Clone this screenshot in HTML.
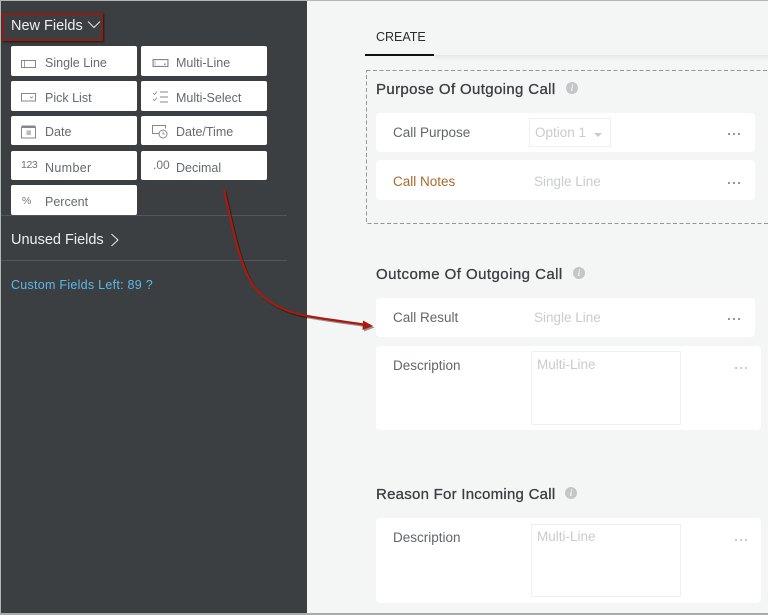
<!DOCTYPE html>
<html><head><meta charset="utf-8">
<style>
html,body{margin:0;padding:0}
body{width:768px;height:615px;position:relative;overflow:hidden;background:#f4f5f5;font-family:"Liberation Sans",sans-serif}
.w{position:absolute;left:0;top:0;width:768px;height:615px;overflow:hidden;filter:blur(.35px)}
.a{position:absolute}
.t{position:absolute;white-space:nowrap;line-height:16px}
.b{position:absolute;background:#fff;border-radius:2px}
.bt{position:absolute;white-space:nowrap;font-size:12.5px;line-height:16px;color:#666a6c}
.r{position:absolute;background:#fff;border-radius:4px}
.h{position:absolute;white-space:nowrap;font-size:15px;line-height:18px;color:#3b3e40;-webkit-text-stroke:.3px #3b3e40}
.l{position:absolute;white-space:nowrap;font-size:13.5px;line-height:16px;color:#636668}
.p{position:absolute;white-space:nowrap;font-size:13.5px;line-height:16px;color:#c9cbcc}
.i{position:absolute;width:12px;height:12px;border-radius:50%;background:#c4c6c7;color:#f4f5f5;font:italic bold 9px/12px "Liberation Serif",serif;text-align:center}
.d{position:absolute;width:14px;height:3px}
.d i{position:absolute;top:0;width:2px;height:2px;border-radius:50%;background:#75787a}
.d.f i{background:#b8babb}
.ta{position:absolute;border:1px solid #eeefef;box-sizing:border-box;background:#fff}
svg{position:absolute;overflow:visible}
</style></head>
<body>
<div class="w">
<div class="a" style="left:0;top:0;width:768px;height:1px;background:#b4b5b5"></div>
<div class="a" style="left:0;top:613px;width:768px;height:2px;background:#a9aaaa"></div>
<div class="a" style="left:0;top:1px;width:1px;height:612px;background:#b4b5b5"></div>
<div class="a" style="left:1px;top:1px;width:306px;height:612px;background:#3b3f42"></div>

<div class="a" style="left:2px;top:13px;width:101px;height:28px;box-sizing:border-box;border:2px solid #8f1d14;box-shadow:1px 1px 2px rgba(0,0,0,.6)"></div>
<div class="t" style="left:11px;top:18px;font-size:14.5px;color:#eef0f0">New Fields</div>
<svg style="left:0;top:0" width="768" height="615" viewBox="0 0 768 615" fill="none">
<path d="M88 21.5L94 27.5L100 21.5" stroke="#e8eaea" stroke-width="1"/>
<path d="M111.5 234L118 240L111.5 246" stroke="#e8eaea" stroke-width="1"/>
</svg>

<div class="b" style="left:11px;top:46px;width:126px;height:30px"></div>
<div class="b" style="left:141px;top:46px;width:126px;height:30px"></div>
<div class="b" style="left:11px;top:81px;width:126px;height:30px"></div>
<div class="b" style="left:141px;top:81px;width:126px;height:30px"></div>
<div class="b" style="left:11px;top:116px;width:126px;height:29px"></div>
<div class="b" style="left:141px;top:116px;width:126px;height:29px"></div>
<div class="b" style="left:11px;top:151px;width:126px;height:29px"></div>
<div class="b" style="left:141px;top:151px;width:126px;height:29px"></div>
<div class="b" style="left:11px;top:185px;width:126px;height:30px"></div>

<div class="bt" style="left:45px;top:55px">Single Line</div>
<div class="bt" style="left:176px;top:55px">Multi-Line</div>
<div class="bt" style="left:45px;top:90px">Pick List</div>
<div class="bt" style="left:176px;top:90px">Multi-Select</div>
<div class="bt" style="left:45px;top:124px">Date</div>
<div class="bt" style="left:176px;top:124px">Date/Time</div>
<div class="bt" style="left:45px;top:160px;letter-spacing:.35px">Number</div>
<div class="bt" style="left:176px;top:160px">Decimal</div>
<div class="bt" style="left:45px;top:194px">Percent</div>

<div class="t" style="left:21px;top:157px;font-size:10.5px;color:#707375;letter-spacing:-.4px">123</div>
<div class="t" style="left:153px;top:157px;font-size:12px;color:#707375">.00</div>
<div class="t" style="left:22px;top:193px;font-size:10.5px;color:#707375">%</div>

<svg style="left:0;top:0" width="768" height="615" viewBox="0 0 768 615" fill="none" stroke="#85888a" stroke-width="1">
<rect x="21.5" y="60.5" width="14" height="7"/>
<path d="M24.5 61v6" stroke-width=".8"/>
<rect x="153" y="59.5" width="15" height="7" fill="#dcdddd"/>
<rect x="156" y="60.5" width="11" height="5" fill="#fff" stroke="none"/>
<rect x="164" y="63.5" width="1.5" height="1.5" fill="#85888a" stroke="none"/>
<rect x="21.5" y="93.5" width="14" height="7.5"/>
<path d="M30 96.5l1.5 1.5 1.5-1.5" stroke-width=".8"/>
<path d="M153 93l1.5 1.5 2.5-3M153 99l1.5 1.5 2.5-3" stroke-width=".8"/>
<path d="M160 92h8M160 97h8M160 102h8" stroke-width=".9"/>
<rect x="21.5" y="127.5" width="14" height="10.5"/>
<path d="M21.5 126.5h14" stroke-width="2"/>
<rect x="26.5" y="130.5" width="4.5" height="4.5" fill="#b8babb" stroke="none"/>
<path d="M159 133.5h-6.5v-8h13v3"/>
<circle cx="163" cy="134" r="4" fill="#fff"/>
<path d="M163 131.5v2.5h2" stroke-width=".8"/>
</svg>

<div class="a" style="left:1px;top:215px;width:286px;height:1px;background:#52565a"></div>
<div class="a" style="left:1px;top:260px;width:286px;height:1px;background:#52565a"></div>
<div class="t" style="left:11px;top:232px;font-size:14.5px;color:#eef0f0">Unused Fields</div>
<div class="t" style="left:11px;top:277px;font-size:12.5px;color:#5bb8ea;letter-spacing:.27px">Custom Fields Left: 89 ?</div>

<!-- main -->
<div class="a" style="left:434px;top:55px;width:334px;height:6px;background:linear-gradient(#e6e7e7,#f4f5f5)"></div>
<div class="t" style="left:376px;top:29px;font-size:12.5px;color:#2a2c2e">CREATE</div>
<div class="a" style="left:365px;top:54px;width:69px;height:2px;background:#111"></div>
<svg style="left:0;top:0" width="768" height="615" viewBox="0 0 768 615" fill="none">
<rect x="366.5" y="70.5" width="420" height="153" stroke="#94979a" stroke-width="1" stroke-dasharray="4 2.5"/>
</svg>

<div class="h" style="left:376px;top:81px;letter-spacing:.36px">Purpose Of Outgoing Call</div>
<div class="i" style="left:566px;top:82px">i</div>
<div class="r" style="left:376px;top:113px;width:379px;height:39px"></div>
<div class="r" style="left:376px;top:160px;width:379px;height:40px"></div>
<div class="l" style="left:393px;top:125px">Call Purpose</div>
<div class="a" style="left:529px;top:118px;width:82px;height:29px;box-sizing:border-box;border:1px solid #eeefef"></div>
<div class="p" style="left:535px;top:125px">Option 1</div>
<div class="a" style="left:594px;top:133px;width:0;height:0;border-left:4px solid transparent;border-right:4px solid transparent;border-top:4px solid #c9cbcc"></div>
<div class="d" style="left:728px;top:133px"><i style="left:0"></i><i style="left:5px"></i><i style="left:10px"></i></div>
<div class="l" style="left:393px;top:174px;color:#a86a2c">Call Notes</div>
<div class="p" style="left:534px;top:174px">Single Line</div>
<div class="d" style="left:728px;top:182px"><i style="left:0"></i><i style="left:5px"></i><i style="left:10px"></i></div>

<div class="h" style="left:376px;top:266px;letter-spacing:.45px">Outcome Of Outgoing Call</div>
<div class="i" style="left:573px;top:267px">i</div>
<div class="r" style="left:376px;top:298px;width:379px;height:39px"></div>
<div class="l" style="left:393px;top:310px">Call Result</div>
<div class="p" style="left:534px;top:310px">Single Line</div>
<div class="d" style="left:728px;top:318px"><i style="left:0"></i><i style="left:5px"></i><i style="left:10px"></i></div>
<div class="r" style="left:376px;top:346px;width:385px;height:84px"></div>
<div class="l" style="left:393px;top:358px">Description</div>
<div class="ta" style="left:531px;top:351px;width:150px;height:74px"></div>
<div class="p" style="left:537px;top:357px">Multi-Line</div>
<div class="d f" style="left:735px;top:367px"><i style="left:0"></i><i style="left:5px"></i><i style="left:10px"></i></div>

<div class="h" style="left:376px;top:486px;letter-spacing:.25px">Reason For Incoming Call</div>
<div class="i" style="left:565px;top:487px">i</div>
<div class="r" style="left:376px;top:518px;width:385px;height:85px"></div>
<div class="l" style="left:393px;top:530px">Description</div>
<div class="ta" style="left:531px;top:524px;width:150px;height:73px"></div>
<div class="p" style="left:537px;top:529px">Multi-Line</div>
<div class="d f" style="left:735px;top:539px"><i style="left:0"></i><i style="left:5px"></i><i style="left:10px"></i></div>

<!-- arrow -->
<svg style="left:0;top:0" width="768" height="615" viewBox="0 0 768 615" fill="none">
<g transform="translate(1.5 1.5)" opacity=".4">
<path d="M224 190C232 225 238 258 250 280C262 302 285 312 307 316C327 319.5 347 322 367 325" stroke="#000" stroke-width="2"/>
<path d="M373 326l-10-5.5-.5 9.5z" fill="#000"/>
</g>
<path d="M224 190C232 225 238 258 250 280C262 302 285 312 307 316C327 319.5 347 322 367 325" stroke="#ab1a0a" stroke-width="2.2"/>
<path d="M373 326l-10-5.5-.5 9.5z" fill="#ab1a0a"/>
</svg>
</div>
</body></html>
